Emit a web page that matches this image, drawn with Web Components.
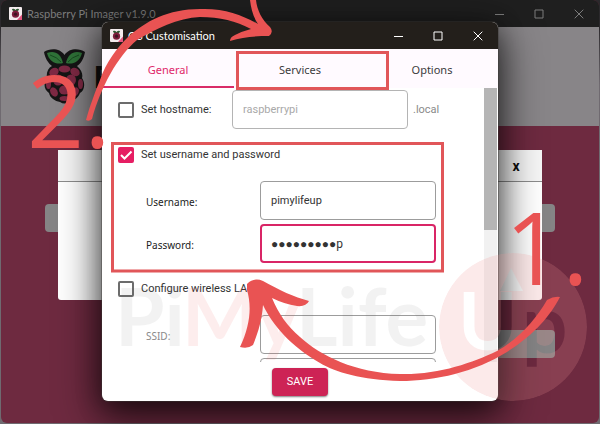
<!DOCTYPE html>
<html lang="en">
<head>
<meta charset="utf-8">
<title>Raspberry Pi Imager v1.9.0</title>
<style>
html, body {
  height: 100%;
  margin: 0;
}

body {
  overflow: hidden;
  background: linear-gradient(#2b292c 0 6%, #6f6a70 20% 100%);
  font-family: Roboto, "Liberation Sans", sans-serif;
  font-size: 11px;
}
</style>
</head>
<body>
<imager-desktop>
  <imager-window>
    <title-bar slot="title" label="Raspberry Pi Imager v1.9.0" inactive></title-bar>
  </imager-window>

  <os-dialog slot="dialog">
    <title-bar slot="title" label="OS Customisation"></title-bar>
    <tab-strip slot="tabs"></tab-strip>

    <check-row label="Set hostname:" class="host">
      <text-field value="raspberrypi" label="Hostname" muted></text-field>
      <span class="suffix">.local</span>
    </check-row>
    <check-row label="Set username and password" checked></check-row>
    <text-field caption="Username:" value="pimylifeup"></text-field>
    <text-field caption="Password:" value="●●●●●●●●●p" active></text-field>
    <check-row label="Configure wireless LAN"></check-row>
    <text-field caption="SSID:" value="" dim></text-field>
    <text-field value="" label="Wireless password" dim></text-field>
  </os-dialog>

  <step-marks slot="marks"></step-marks>
</imager-desktop>

<script>
function makeTemplate (html) {
  const t = document.createElement('template');
  t.innerHTML = html;
  return t;
}

class BaseElement extends HTMLElement {
  constructor () {
    super();
    this.attachShadow({ mode: 'open' });
    this.shadowRoot.append(this.constructor.template.content.cloneNode(true));
  }

  $(selector) {
    return this.shadowRoot.querySelector(selector);
  }
}

/* desktop: stacks the window, the dialog and the marks */
class ImagerDesktop extends BaseElement {
  static template = makeTemplate(`
<style>
:host {
  display: block;
  position: relative;
  height: 100%;
}

.dialog {
  position: absolute;
  left: 17%;
  right: 17%;
  top: 22px;
  bottom: 23px;
}

.marks {
  position: absolute;
  inset: 0;
  pointer-events: none;
}
</style>
<slot></slot>
<div class="dialog"><slot name="dialog"></slot></div>
<div class="marks"><slot name="marks"></slot></div>
`);
}
customElements.define('imager-desktop', ImagerDesktop);

/* title bar with app icon and window buttons */
class TitleBar extends BaseElement {
  static template = makeTemplate(`
<style>
:host {
  display: flex;
  align-items: center;
  height: 27px;
  padding-left: 8px;
  background: #231f1b;
  color: #fff;
  font: 11px/16px Lato, "Noto Sans", sans-serif;
}

:host([inactive]) {
  background: #1f1f1f;
  color: #7d7d7d;
}

.icon {
  flex: none;
  margin-right: 5px;
}

.label {
  flex: 1;
  white-space: nowrap;
}

button {
  width: 40px;
  height: 26px;
  padding: 0;
  border: 0;
  background: none;
  color: inherit;
}

button svg {
  display: block;
  margin: auto;
}
</style>
<svg class="icon" width="13" height="13" viewBox="0 0 13 13">
  <rect width="13" height="13" rx="1" fill="#f4ecee"/>
  <path d="M3 2q2-1 3.500 1q1.500-2 3.500-1q0 2-3.500 2.500q-3.500-.5-3.500-2.500z" fill="#2d5a32"/>
  <circle cx="6.500" cy="7.200" r="3.600" fill="#7c1c3b"/>
  <circle cx="6.500" cy="7.200" r="1.600" fill="#3b1420"/>
  <path d="M13 7.500V13H8z" fill="#e2547f"/>
</svg>
<span class="label"></span>
<button aria-label="Minimise"><svg width="10" height="10" viewBox="0 0 10 10"><path d="M1 5.500h9" stroke="currentColor"/></svg></button>
<button aria-label="Maximise"><svg width="10" height="10" viewBox="0 0 10 10"><path d="M1 1h8v8H1z" fill="none" stroke="currentColor"/></svg></button>
<button aria-label="Close"><svg width="10" height="10" viewBox="0 0 10 10"><path d="M.7.700l8.600 8.600M9.300.700L.7 9.300" stroke="currentColor"/></svg></button>
`);

  connectedCallback () {
    this.$('.label').textContent = this.getAttribute('label');
  }
}
customElements.define('title-bar', TitleBar);

/* main window, greyed out behind the dialog */
class ImagerWindow extends BaseElement {
  static template = makeTemplate(`
<style>
:host {
  display: flex;
  flex-direction: column;
  box-sizing: border-box;
  height: calc(100% - 1px);
  margin: 0 1px;
  border-radius: 6px;
  overflow: hidden;
  background: #6e2a40;
}

header {
  display: flex;
  align-items: center;
  gap: 8px;
  box-sizing: border-box;
  height: 99px;
  padding: 0 0 0 42px;
  overflow: hidden;
  background: #888588;
}

header svg {
  flex: none;
}

h1 {
  margin: 0;
  font: bold 32px/40px Roboto, sans-serif;
  color: #111;
  white-space: nowrap;
}

main {
  position: relative;
  flex: 1;
  display: grid;
  grid-template-columns: repeat(3, 1fr);
  grid-auto-rows: 28px;
  align-content: start;
  gap: 98px 20px;
  padding: 78px 44px 0;
}

main > button {
  border: 0;
  border-radius: 4px;
  background: #858485;
}

.last {
  grid-column: 3;
}

.popup {
  position: absolute;
  left: 57px;
  right: 57px;
  top: 24px;
  height: 150px;
  border-radius: 3px;
  background: #fff;
}

.bar {
  display: flex;
  justify-content: flex-end;
  height: 31px;
  padding-right: 14px;
  border-bottom: 1px solid #8c8c8c;
  background: #f6f6f6;
}

.bar button {
  width: 24px;
  padding: 0;
  border: 0;
  background: none;
  font: bold 14px/30px Roboto, sans-serif;
  color: #111;
}
</style>
<slot name="title"></slot>
<header>
  <svg width="43" height="55" viewBox="0 0 43 55">
    <path d="M1 3C7-1 17-1 21.500 6C26-1 36-1 42 3C41 9 38 15 34 17C39 21 40 26 39 29C43 35 41 42 37 44C35 50 29 52 26 53C23 55 20 55 17 53C12 52 7 49 6 44C1 41 0 34 4 29C3 24 5 19 9 17C5 14 2 9 1 3z" fill="#151515"/>
    <path d="M4 4C11 1 18 4 20 14C14 16 6 13 4 4zM39 4C32 1 25 4 23 14C29 16 37 13 39 4z" fill="#2f7238"/>
    <path d="M7 6q7 2 11 7M36 6q-7 2-11 7" fill="none" stroke="#174a20"/>
    <g fill="#7e2944">
      <ellipse cx="21.500" cy="20" rx="6" ry="3.500"/>
      <ellipse cx="11" cy="23" rx="5" ry="4" transform="rotate(-35 11 23)"/>
      <ellipse cx="32" cy="23" rx="5" ry="4" transform="rotate(35 32 23)"/>
      <ellipse cx="15" cy="31" rx="5" ry="5.500"/>
      <ellipse cx="28" cy="31" rx="5" ry="5.500"/>
      <ellipse cx="5.500" cy="35" rx="2.500" ry="5"/>
      <ellipse cx="37.500" cy="35" rx="2.500" ry="5"/>
      <ellipse cx="21.500" cy="41" rx="5.500" ry="4.500"/>
      <ellipse cx="11" cy="43" rx="3.500" ry="5" transform="rotate(-30 11 43)"/>
      <ellipse cx="32" cy="43" rx="3.500" ry="5" transform="rotate(30 32 43)"/>
      <ellipse cx="21.500" cy="49.500" rx="5" ry="2.500"/>
    </g>
  </svg>
  <h1>R</h1>
</header>
<main>
  <button></button>
  <button></button>
  <button></button>
  <button class="last"></button>
  <div class="popup">
    <div class="bar"><button>x</button></div>
  </div>
</main>
`);
}
customElements.define('imager-window', ImagerWindow);

class OsDialog extends BaseElement {
  static template = makeTemplate(`
<style>
:host {
  display: flex;
  flex-direction: column;
  height: 100%;
  border-radius: 6px;
  overflow: hidden;
  background: #fff;
  box-shadow: 0 0 0 1px rgba(60, 58, 56, .4), 0 4px 24px rgba(0, 0, 0, .35), 0 14px 40px 4px rgba(0, 0, 0, .65);
}

.view {
  flex: 1;
  display: flex;
  min-height: 0;
}

.form {
  flex: 1;
  display: flex;
  flex-direction: column;
  gap: 4px;
  padding: 2px 48px 0 16px;
  overflow: hidden;
}

.scroll {
  width: 13px;
  margin-right: 1px;
  background: #f1f1f1;
}

.thumb {
  height: 52%;
  background: #b5b5b5;
}

footer {
  display: flex;
  justify-content: center;
  padding: 6px 0 5px;
}

footer button {
  width: 56px;
  height: 28px;
  padding: 0;
  border: 0;
  border-radius: 4px;
  background: #cd2355;
  box-shadow: 0 1px 2px rgba(0, 0, 0, .5);
  font: 11px/28px Roboto, sans-serif;
  color: #fff;
}
</style>
<slot name="title"></slot>
<slot name="tabs"></slot>
<div class="view">
  <div class="form"><slot></slot></div>
  <div class="scroll"><div class="thumb"></div></div>
</div>
<footer><button>SAVE</button></footer>
`);
}
customElements.define('os-dialog', OsDialog);

class TabStrip extends BaseElement {
  static template = makeTemplate(`
<style>
:host {
  display: grid;
  grid-template-columns: repeat(3, 1fr);
  height: 39px;
  background: #fffaff;
}

button {
  padding: 4px 0 0;
  border: 0;
  border-bottom: 2px solid transparent;
  background: none;
  font: 11px/16px "Noto Sans", "Open Sans", sans-serif;
  color: #3c3c3c;
}

button[aria-selected=true] {
  border-color: #d92b68;
  color: #e0286a;
}
</style>
<button role="tab" aria-selected="true">General</button>
<button role="tab">Services</button>
<button role="tab">Options</button>
`);

  connectedCallback () {
    this.setAttribute('role', 'tablist');
  }
}
customElements.define('tab-strip', TabStrip);

class CheckRow extends BaseElement {
  static template = makeTemplate(`
<style>
:host {
  display: flex;
  align-items: center;
  flex: none;
  height: 44px;
  color: #333;
}

:host(.host) {
  height: 39px;
  margin-right: -29px;
}

label {
  display: flex;
  align-items: center;
  gap: 7px;
  font-size: 11px;
  line-height: 16px;
  white-space: nowrap;
}

:host(.host) label {
  width: 114px;
}

input {
  appearance: none;
  flex: none;
  width: 16px;
  height: 16px;
  margin: 0;
  border: 2px solid #6c6c6c;
  border-radius: 2px;
  background: #fff;
}

input:checked {
  border-color: #e61e63;
  background: #e61e63;
}

.box {
  display: grid;
}

.box > * {
  grid-area: 1 / 1;
}

svg {
  display: none;
  pointer-events: none;
}

input:checked + svg {
  display: block;
}

::slotted(text-field) {
  flex: none;
  width: 176px;
}

::slotted(.suffix) {
  margin-left: 5px;
  color: #8a8a8a;
}
</style>
<label>
  <span class="box">
    <input type="checkbox">
    <svg width="16" height="16" viewBox="0 0 16 16"><path d="M3 8l3.500 3.500L13.500 4.500" fill="none" stroke="#fff" stroke-width="2"/></svg>
  </span>
  <span class="text"></span>
</label>
<slot></slot>
`);

  connectedCallback () {
    this.$('.text').textContent = this.getAttribute('label');
    this.$('input').checked = this.hasAttribute('checked');
  }
}
customElements.define('check-row', CheckRow);

class TextField extends BaseElement {
  static template = makeTemplate(`
<style>
:host {
  display: flex;
  align-items: center;
  justify-content: flex-end;
  flex: none;
  height: 39px;
}

label {
  flex: 1;
  padding: 2px 0 0 28px;
  font: 10px/16px "Noto Sans", "Open Sans", sans-serif;
  color: #222;
}

label:empty {
  padding: 0;
}

:host([dim]) label {
  color: #8a8a8a;
}

input {
  box-sizing: border-box;
  width: 176px;
  height: 39px;
  padding: 0 10px;
  border: 1px solid #9c9c9c;
  border-radius: 4px;
  background: none;
  font: 11px/16px Roboto, sans-serif;
  color: #333;
  outline: 0;
}

:host([muted]) input {
  color: #a9a9a9;
  border-color: #b4b4b4;
}

:host([active]) input {
  padding: 0 9px;
  border: 2px solid #d92566;
  font-size: 12px;
}
</style>
<label for="field"></label>
<input id="field" type="text">
`);

  connectedCallback () {
    const input = this.$('input');
    this.$('label').textContent = this.getAttribute('caption') || '';
    input.value = this.getAttribute('value') || '';
    if (this.hasAttribute('label')) {
      input.setAttribute('aria-label', this.getAttribute('label'));
    }
  }
}
customElements.define('text-field', TextField);

/* watermark, numbered steps, arrows and highlight frames */
class StepMarks extends BaseElement {
  static template = makeTemplate(`
<style>
:host {
  display: block;
  height: 100%;
}

svg {
  display: block;
  width: 100%;
  height: 100%;
}

.step {
  font: 100px "Open Sans", sans-serif;
}

.mark {
  font: bold 80px Lato, sans-serif;
}
</style>
<svg viewBox="0 0 600 424">
  <mask id="cut">
    <circle cx="513" cy="327" r="74" fill="#fff"/>
    <text class="mark" x="458" y="350">U</text>
    <path d="M500 291L511 268L523 291z"/>
    <text class="mark" x="522" y="353">p</text>
  </mask>
  <circle cx="513" cy="327" r="74" fill="#f09696" fill-opacity=".2" mask="url(#cut)"/>
  <g class="mark">
    <text x="115" y="346" fill="#555" fill-opacity=".08">Pi</text>
    <text x="182" y="346" fill="#f05050" fill-opacity=".1">My</text>
    <text x="296" y="346" fill="#555" fill-opacity=".08">Life</text>
  </g>
  <g fill="none" stroke="#e15659" stroke-width="3">
    <path d="M237.500 52.500h150v36h-150z"/>
    <path d="M112.500 143.500h330v127.500h-330z"/>
  </g>
  <g fill="#e95353">
    <text class="step" x="27" y="148">2.</text>
    <text class="step" x="505" y="285">1.</text>
    <path d="M86 120C90 105 96 90 100 80C106 62 117 48 128 37C146 21 168 9 200 9C224 8 242 15 258 24C253 17 251 8 250 0H256C257 10 262 20 270 27Q274 32 269 36C256 36 243 37 230 41Q230 37 235 35Q243 31 251 29C236 21 220 17 200 17C178 18 155 29 137 40C117 57 101 87 92 119Q89 122 86 120z"/>
    <path d="M247 284Q254 277 263 281C279 290 294 297 309 301Q306 307 297 306Q284 304 272 298C278 313 288 327 300 337C321 356 355 373 400 374C438 375 472 363 497 351C520 338 536 319 547 300Q554 296 560 297C550 316 535 334 507 352C475 372 436 381 400 381C362 380 335 372 320 363C291 346 273 326 263 305C262 320 258 333 253 345Q248 349 240 347C250 326 252 307 247 290z"/>
  </g>
</svg>
`);
}
customElements.define('step-marks', StepMarks);
</script>
</body>
</html>
